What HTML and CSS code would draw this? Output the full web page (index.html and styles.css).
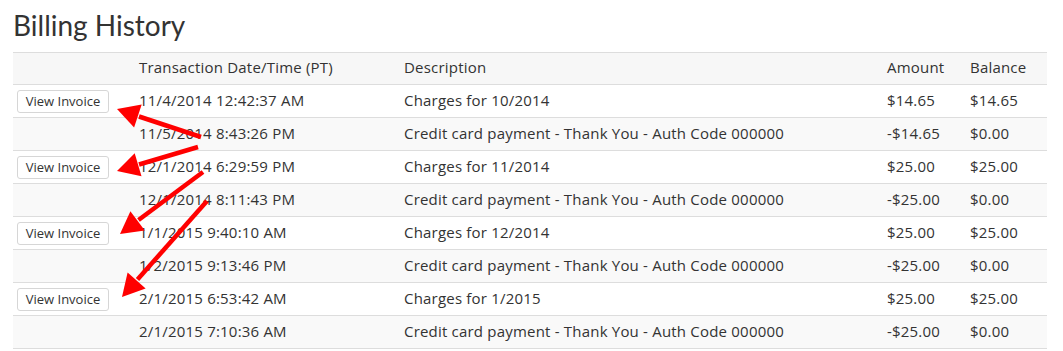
FILE: index.html
```html
<!DOCTYPE html>
<html>
<head>
<meta charset="utf-8">
<link rel="stylesheet" href="styles.css">
</head>
<body>
<div class="page">
  <h1 class="title">Billing History</h1>
  <table class="billing">
    <thead>
      <tr>
        <th class="c-btn"></th>
        <th class="c-date">Transaction Date/Time (PT)</th>
        <th class="c-desc">Description</th>
        <th class="c-amt">Amount</th>
        <th class="c-bal">Balance</th>
      </tr>
    </thead>
    <tbody>
      <tr><td><button class="btn">View Invoice</button></td><td>11/4/2014 12:42:37 AM</td><td>Charges for 10/2014</td><td>$14.65</td><td>$14.65</td></tr>
      <tr><td></td><td>11/5/2014 8:43:26 PM</td><td>Credit card payment - Thank You - Auth Code 000000</td><td>-$14.65</td><td>$0.00</td></tr>
      <tr><td><button class="btn">View Invoice</button></td><td>12/1/2014 6:29:59 PM</td><td>Charges for 11/2014</td><td>$25.00</td><td>$25.00</td></tr>
      <tr><td></td><td>12/1/2014 8:11:43 PM</td><td>Credit card payment - Thank You - Auth Code 000000</td><td>-$25.00</td><td>$0.00</td></tr>
      <tr><td><button class="btn">View Invoice</button></td><td>1/1/2015 9:40:10 AM</td><td>Charges for 12/2014</td><td>$25.00</td><td>$25.00</td></tr>
      <tr><td></td><td>1/2/2015 9:13:46 PM</td><td>Credit card payment - Thank You - Auth Code 000000</td><td>-$25.00</td><td>$0.00</td></tr>
      <tr><td><button class="btn">View Invoice</button></td><td>2/1/2015 6:53:42 AM</td><td>Charges for 1/2015</td><td>$25.00</td><td>$25.00</td></tr>
      <tr><td></td><td>2/1/2015 7:10:36 AM</td><td>Credit card payment - Thank You - Auth Code 000000</td><td>-$25.00</td><td>$0.00</td></tr>
    </tbody>
  </table>
  <svg class="arrows" width="1063" height="351" viewBox="0 0 1063 351">
    <g stroke="#f00" stroke-width="4.5" fill="none">
      <line x1="201" y1="137" x2="139" y2="116.5"/>
      <line x1="198" y1="147" x2="139" y2="164.5"/>
      <line x1="203" y1="172" x2="138.5" y2="220"/>
      <line x1="207" y1="201" x2="137.5" y2="279.5"/>
    </g>
    <g fill="#f00">
      <polygon points="117,109 141.7,104.6 134.1,127.4"/>
      <polygon points="117,171 134.7,153.3 141.5,176.3"/>
      <polygon points="120,234 130.4,211.2 144.8,230.4"/>
      <polygon points="122,297 127.6,272.5 145.6,288.5"/>
    </g>
  </svg>
</div>
</body>
</html>
```
FILE: styles.css
```css
html, body {
  margin: 0;
  padding: 0;
  background: #fff;
}
.page {
  position: relative;
  padding: 8px 16px 0 13px;
  font-family: "Open Sans", Lato, sans-serif;
  color: #333;
}
.title {
  margin: 0 0 10px 0;
  font-family: Lato, "Open Sans", sans-serif;
  font-size: 28px;
  font-weight: 400;
  line-height: 34px;
  color: #333;
}
.billing {
  width: 1034px;
  border-collapse: collapse;
  font-size: 15px;
  letter-spacing: 0.2px;
  border-top: 1px solid #ddd;
}
.billing th, .billing td {
  text-align: left;
  font-weight: 400;
  padding: 0 8px 3px 8px;
  height: 29px;
  border-bottom: 1px solid #ddd;
  vertical-align: middle;
  white-space: nowrap;
}
.billing th {
  height: 28px;
  background: #f7f7f7;
}
.billing tbody tr:nth-child(even) td {
  background: #f9f9f9;
}
.c-btn { width: 102px; }
.c-date { width: 249px; }
.c-desc { width: 467px; }
.c-amt { width: 67px; }
.billing td:first-child {
  padding-left: 4px;
}
.btn {
  font-family: "Open Sans", Lato, sans-serif;
  font-size: 13px;
  letter-spacing: 0;
  color: #333;
  background: #fff;
  border: 1px solid #d6d6d6;
  border-radius: 3px;
  height: 23px;
  width: 92px;
  padding: 0;
  line-height: 21px;
  display: block;
  margin-top: 3px;
}
.arrows {
  position: absolute;
  left: 0;
  top: 0;
  pointer-events: none;
}
```
